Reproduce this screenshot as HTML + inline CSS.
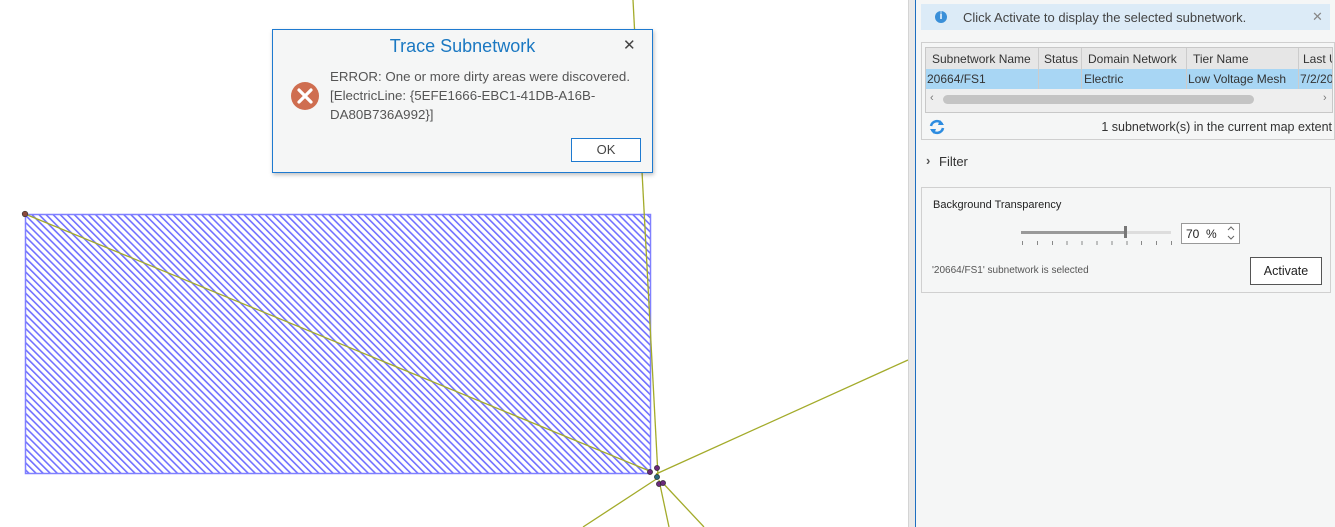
<!DOCTYPE html>
<html><head><style>
body{margin:0;width:1335px;height:527px;overflow:hidden;background:#fff;font-family:"Liberation Sans",sans-serif;position:relative}
.abs{position:absolute}
</style></head><body>
<svg class="abs" style="left:0;top:0" width="908" height="527">
<defs><pattern id="h" width="5" height="5" patternUnits="userSpaceOnUse" patternTransform="rotate(-45)"><rect width="5" height="5" fill="#fff"/><rect width="1.6" height="5" fill="#7070ff"/></pattern></defs>
<rect x="25.5" y="214.5" width="625" height="259" fill="url(#h)" stroke="#8080ff" stroke-width="1.5"/>
<g stroke="#a3ab2a" stroke-width="1.3" fill="none">
<line x1="633" y1="0" x2="658" y2="476"/>
<line x1="25" y1="214" x2="652" y2="472"/>
<line x1="656" y1="474" x2="908" y2="360"/>
<line x1="658" y1="478" x2="583" y2="527"/>
<line x1="659" y1="480" x2="669" y2="527"/>
<line x1="661" y1="481" x2="704" y2="527"/>
</g>
<circle cx="25" cy="214" r="2.8" fill="#8a4a3a" stroke="#333" stroke-width=".6"/>
<g fill="#6a2a7a" stroke="#222" stroke-width=".6">
<circle cx="650" cy="472" r="2.6"/><circle cx="657" cy="468" r="2.6"/><circle cx="659" cy="484" r="2.6"/><circle cx="663" cy="483" r="2.6"/></g>
<circle cx="657" cy="477" r="2.6" fill="#2a6a7a" stroke="#222" stroke-width=".6"/>
</svg>

<div class="abs" style="left:272px;top:29px;width:379px;height:142px;background:#f5f6f6;border:1px solid #1e7ad0;box-shadow:1px 2px 4px rgba(0,0,0,.25)">
<div class="abs" style="left:0;width:379px;top:6px;text-align:center;font-size:18px;color:#1a78c2">Trace Subnetwork</div>
<div class="abs" style="left:350px;top:6px;font-size:15px;color:#444">✕</div>
<svg class="abs" style="left:17px;top:51px" width="30" height="30"><circle cx="15" cy="15" r="14" fill="#cf6e50"/><path d="M9 9L21 21M21 9L9 21" stroke="#fff" stroke-width="3.2" stroke-linecap="round"/></svg>
<div class="abs" style="left:57px;top:37px;font-size:13.3px;line-height:19px;color:#555;white-space:nowrap">ERROR: One or more dirty areas were discovered.<br>[ElectricLine: {5EFE1666-EBC1-41DB-A16B-<br>DA80B736A992}]</div>
<div class="abs" style="left:298px;top:108px;width:68px;height:22px;border:1px solid #1e7ad0;background:#fff;font-size:13px;text-align:center;line-height:22px;color:#444">OK</div>
</div>

<div class="abs" style="left:908px;top:0;width:7px;height:527px;background:#e9e9e9;border-left:1px solid #d4d4d4;box-sizing:border-box"></div>
<div class="abs" style="left:915px;top:0;width:1px;height:527px;background:#1e6fc0"></div>
<div class="abs" style="left:916px;top:0;width:419px;height:527px;background:#f5f6f6">
<div class="abs" style="left:5px;top:4px;width:409px;height:26px;background:#dcebf7">
<div class="abs" style="left:14px;top:7px;width:12px;height:12px;border-radius:50%;background:#3a8fd8;color:#fff;font-size:10px;font-weight:bold;text-align:center;line-height:12px">i</div>
<div class="abs" style="left:42px;top:6px;font-size:13px;color:#444">Click Activate to display the selected subnetwork.</div>
<div class="abs" style="left:391px;top:5px;font-size:13px;color:#888">✕</div>
</div>
<div class="abs" style="left:5px;top:42px;width:414px;height:98px;border:1px solid #cfcfcf;box-sizing:border-box">
<div class="abs" style="left:3px;top:4px;width:408px;height:66px;border:1px solid #c8c8c8;background:#eee;box-sizing:border-box;overflow:hidden;font-size:12px;color:#333">
<div class="abs" style="left:0;top:0;width:410px;height:21px;background:#e6e6e6"></div>
<div class="abs" style="left:0;top:21px;width:410px;height:20px;background:#a8d6f4"></div>
<div class="abs" style="left:112px;top:0;width:1px;height:41px;background:#ccc"></div>
<div class="abs" style="left:155px;top:0;width:1px;height:41px;background:#ccc"></div>
<div class="abs" style="left:260px;top:0;width:1px;height:41px;background:#ccc"></div>
<div class="abs" style="left:372px;top:0;width:1px;height:41px;background:#ccc"></div>
<div class="abs" style="left:6px;top:4px">Subnetwork Name</div>
<div class="abs" style="left:118px;top:4px">Status</div>
<div class="abs" style="left:162px;top:4px">Domain Network</div>
<div class="abs" style="left:267px;top:4px">Tier Name</div>
<div class="abs" style="left:377px;top:4px;white-space:nowrap">Last Up</div>
<div class="abs" style="left:1px;top:24px">20664/FS1</div>
<div class="abs" style="left:158px;top:24px">Electric</div>
<div class="abs" style="left:262px;top:24px;white-space:nowrap">Low Voltage Mesh</div>
<div class="abs" style="left:374px;top:24px">7/2/2024</div>
<div class="abs" style="left:17px;top:47px;width:311px;height:9px;border-radius:5px;background:#c4c4c4"></div>
<div class="abs" style="left:4px;top:44px;font-size:11px;color:#777">‹</div>
<div class="abs" style="left:397px;top:44px;font-size:11px;color:#777">›</div>
</div>
<svg class="abs" style="left:6px;top:75px" width="18" height="18"><path d="M3 8A6 6 0 0 1 14 6M15 10A6 6 0 0 1 4 12" stroke="#2d8ce0" stroke-width="2.6" fill="none"/><path d="M12 2L16 7L10 7Z M6 16L2 11L8 11Z" fill="#2d8ce0"/></svg>
<div class="abs" style="right:2px;top:77px;font-size:12.5px;color:#333">1 subnetwork(s) in the current map extent</div>
</div>
<div class="abs" style="left:10px;top:153px;font-size:13px;font-weight:bold;color:#555">›</div>
<div class="abs" style="left:23px;top:154px;font-size:13px;color:#333">Filter</div>
<div class="abs" style="left:5px;top:187px;width:410px;height:106px;border:1px solid #d0d0d0;box-sizing:border-box">
<div class="abs" style="left:11px;top:11px;font-size:11px;color:#222">Background Transparency</div>
<div class="abs" style="left:99px;top:43px;width:106px;height:3px;background:#999"></div>
<div class="abs" style="left:205px;top:43px;width:44px;height:3px;background:#ddd"></div>
<div class="abs" style="left:202px;top:38px;width:3px;height:12px;background:#777"></div>
<div class="abs" style="left:100px;top:53px;width:150px;height:4px;background:repeating-linear-gradient(90deg,#888 0 1px,transparent 1px 14.9px)"></div>
<div class="abs" style="left:259px;top:35px;width:59px;height:21px;border:1px solid #999;background:#fff;box-sizing:border-box;font-size:12px;padding:3px 0 0 4px;color:#222">70&nbsp;&nbsp;%</div>
<svg class="abs" style="left:304px;top:36px" width="10" height="18"><path d="M2 6L5 3L8 6M2 12L5 15L8 12" stroke="#666" fill="none"/></svg>
<div class="abs" style="left:10px;top:77px;font-size:10px;color:#555">'20664/FS1' subnetwork is selected</div>
<div class="abs" style="left:328px;top:69px;width:70px;height:26px;border:1px solid #555;background:#fff;font-size:12.5px;text-align:center;line-height:26px;color:#222">Activate</div>
</div>
</div>
</body></html>
